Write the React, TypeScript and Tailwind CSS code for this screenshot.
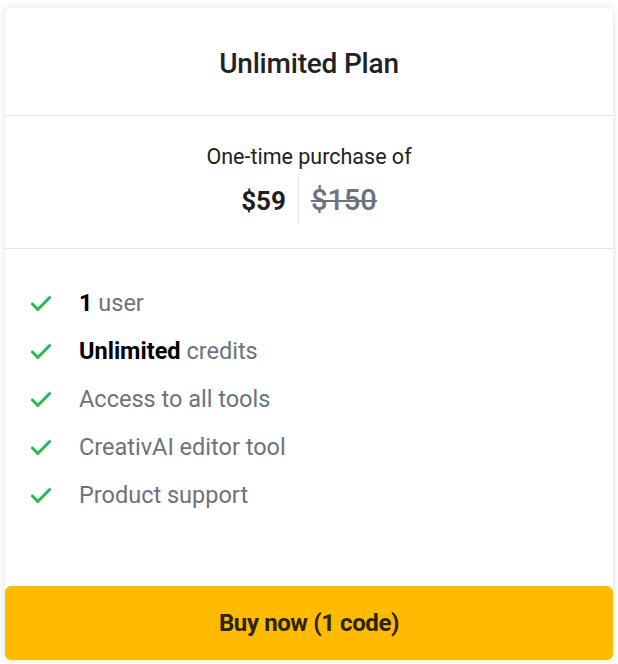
import { Check } from "lucide-react";

const features = [
  { bold: "1", rest: "user" },
  { bold: "Unlimited", rest: "credits" },
  { bold: "", rest: "Access to all tools" },
  { bold: "", rest: "CreativAI editor tool" },
  { bold: "", rest: "Product support" },
];

export default function App() {
  return (
    <div className="min-h-[664px] bg-white px-[5px] pt-[8px] font-['Roboto',sans-serif]">
      <div className="flex h-[652px] flex-col rounded-t-md bg-white shadow-[0_0_8px_rgba(0,0,0,0.13)]">
        <div className="flex h-[108px] items-center justify-center border-b border-[#e5e5e5] pt-[4px]">
          <h2 className="text-[28px] font-medium tracking-[-0.2px] text-[#222]">Unlimited Plan</h2>
        </div>
        <div className="flex h-[133px] flex-col items-center justify-center border-b border-[#e5e5e5] pt-[3px]">
          <p className="text-[21.5px] leading-[28px] text-[#222]">One-time purchase of</p>
          <div className="mt-[7px] flex items-center">
            <span className="pr-[12px] text-[26px] font-bold text-[#1f1f1f]">$59</span>
            <span className="h-[46px] w-px bg-[#e2e2e2]" />
            <span className="pl-[12px] text-[29px] font-medium text-[#6b7280] line-through decoration-[2px]">
              $150
            </span>
          </div>
        </div>
        <ul className="flex-1 pl-[23px] pt-[31px]">
          {features.map((f) => (
            <li key={f.rest} className="flex h-[48px] items-center">
              <Check className="size-[26px] text-[#1fba4c]" strokeWidth={2.6} />
              <span className="ml-[25px] text-[23.5px] text-[#6b7280]">
                {f.bold && <b className="font-bold text-black">{f.bold} </b>}
                {f.rest}
              </span>
            </li>
          ))}
        </ul>
        <button className="flex h-[74px] items-center justify-center rounded-md bg-[#ffbb00] text-[24px] font-bold tracking-[-0.4px] text-[#2a2410]">
          Buy now (1 code)
        </button>
      </div>
    </div>
  );
}
